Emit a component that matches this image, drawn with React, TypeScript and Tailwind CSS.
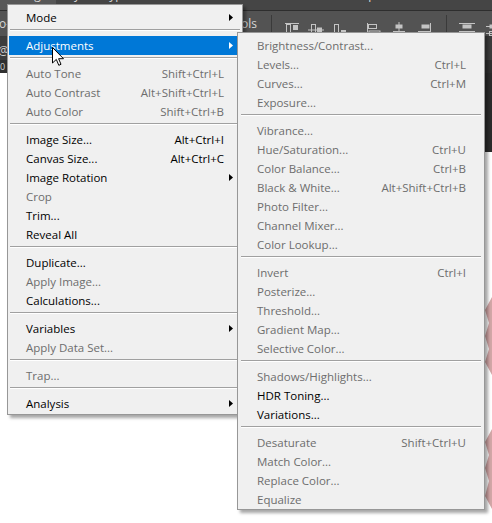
import React from 'react';

type Row = { l: string; s?: string; d?: boolean; a?: boolean; hl?: boolean };
type Item = Row | 'sep';

const mainItems: Item[] = [
  { l: 'Mode', a: true },
  'sep',
  { l: 'Adjustments', a: true, hl: true },
  'sep',
  { l: 'Auto Tone', s: 'Shift+Ctrl+L', d: true },
  { l: 'Auto Contrast', s: 'Alt+Shift+Ctrl+L', d: true },
  { l: 'Auto Color', s: 'Shift+Ctrl+B', d: true },
  'sep',
  { l: 'Image Size...', s: 'Alt+Ctrl+I' },
  { l: 'Canvas Size...', s: 'Alt+Ctrl+C' },
  { l: 'Image Rotation', a: true },
  { l: 'Crop', d: true },
  { l: 'Trim...' },
  { l: 'Reveal All' },
  'sep',
  { l: 'Duplicate...' },
  { l: 'Apply Image...', d: true },
  { l: 'Calculations...' },
  'sep',
  { l: 'Variables', a: true },
  { l: 'Apply Data Set...', d: true },
  'sep',
  { l: 'Trap...', d: true },
  'sep',
  { l: 'Analysis', a: true },
];

const subItems: Item[] = [
  { l: 'Brightness/Contrast...', d: true },
  { l: 'Levels...', s: 'Ctrl+L', d: true },
  { l: 'Curves...', s: 'Ctrl+M', d: true },
  { l: 'Exposure...', d: true },
  'sep',
  { l: 'Vibrance...', d: true },
  { l: 'Hue/Saturation...', s: 'Ctrl+U', d: true },
  { l: 'Color Balance...', s: 'Ctrl+B', d: true },
  { l: 'Black & White...', s: 'Alt+Shift+Ctrl+B', d: true },
  { l: 'Photo Filter...', d: true },
  { l: 'Channel Mixer...', d: true },
  { l: 'Color Lookup...', d: true },
  'sep',
  { l: 'Invert', s: 'Ctrl+I', d: true },
  { l: 'Posterize...', d: true },
  { l: 'Threshold...', d: true },
  { l: 'Gradient Map...', d: true },
  { l: 'Selective Color...', d: true },
  'sep',
  { l: 'Shadows/Highlights...', d: true },
  { l: 'HDR Toning...' },
  { l: 'Variations...' },
  'sep',
  { l: 'Desaturate', s: 'Shift+Ctrl+U', d: true },
  { l: 'Match Color...', d: true },
  { l: 'Replace Color...', d: true },
  { l: 'Equalize', d: true },
];

function Arrow({ white }: { white?: boolean }) {
  return (
    <svg width="4" height="7" viewBox="0 0 4 7" className="block">
      <path d="M0 0 L4 3.5 L0 7 Z" fill={white ? '#ffffff' : '#000000'} />
    </svg>
  );
}

function Sep({ main }: { main?: boolean }) {
  return (
    <div className={main ? 'h-[9px] pt-[2px] mx-[1px]' : 'h-[9px] pt-[2px] mx-[2px]'}>
      <div className="h-[1px] bg-[#a0a0a0]" />
      <div className="h-[1px] bg-[#ffffff]" />
    </div>
  );
}

function MenuRow({ it, main }: { it: Row; main?: boolean }) {
  const color = it.hl ? 'text-white' : it.d ? 'text-[#6d6d6d]' : 'text-black';
  return (
    <div
      className={
        'flex items-center h-[19px] leading-[19px] whitespace-nowrap ' +
        (main ? 'pl-[17px] pr-[8px] ' : 'pl-[18px] pr-[17px] ') +
        (it.hl ? 'bg-[#0078d7] ' : '') +
        color
      }
    >
      <span className="flex-1">{it.l}</span>
      {it.s && <span>{it.s}</span>}
      {main && (
        <span className="w-[4px] ml-[5px] flex items-center">{it.a && <Arrow white={it.hl} />}</span>
      )}
    </div>
  );
}

function Menu({ items, main }: { items: Item[]; main?: boolean }) {
  return (
    <div className="flex flex-col">
      {items.map((it, i) =>
        it === 'sep' ? <Sep key={i} main={main} /> : <MenuRow key={i} it={it} main={main} />
      )}
    </div>
  );
}

const ic = '#c4c4c4';

function IconAlignTop() {
  return (
    <svg width="16" height="16" viewBox="0 0 16 16">
      <line x1="1" y1="1.5" x2="15" y2="1.5" stroke={ic} />
      <rect x="2.5" y="2.5" width="4" height="11" fill="none" stroke={ic} />
      <rect x="9" y="3" width="5" height="5" fill={ic} />
    </svg>
  );
}
function IconAlignV() {
  return (
    <svg width="16" height="16" viewBox="0 0 16 16">
      <line x1="0" y1="8" x2="16" y2="8" stroke={ic} />
      <rect x="3.5" y="2.5" width="4" height="11" fill="none" stroke={ic} />
      <rect x="9" y="5.5" width="5" height="5" fill={ic} />
    </svg>
  );
}
function IconAlignBottom() {
  return (
    <svg width="16" height="16" viewBox="0 0 16 16">
      <line x1="1" y1="14.5" x2="15" y2="14.5" stroke={ic} />
      <rect x="2.5" y="2.5" width="4" height="11" fill="none" stroke={ic} />
      <rect x="9" y="8" width="5" height="5" fill={ic} />
    </svg>
  );
}
function IconAlignLeft() {
  return (
    <svg width="16" height="16" viewBox="0 0 16 16">
      <line x1="1.5" y1="1" x2="1.5" y2="15" stroke={ic} />
      <rect x="2.5" y="2.5" width="8" height="4" fill="none" stroke={ic} />
      <rect x="3" y="9" width="11" height="5" fill="none" stroke={ic} />
    </svg>
  );
}
function IconAlignH() {
  return (
    <svg width="16" height="16" viewBox="0 0 16 16">
      <line x1="8" y1="0" x2="8" y2="16" stroke={ic} />
      <rect x="4.5" y="2.5" width="7" height="4" fill={ic} />
      <rect x="2.5" y="9.5" width="11" height="4" fill="none" stroke={ic} />
    </svg>
  );
}
function IconAlignRight() {
  return (
    <svg width="16" height="16" viewBox="0 0 16 16">
      <line x1="14.5" y1="1" x2="14.5" y2="15" stroke={ic} />
      <rect x="5.5" y="2.5" width="8" height="4" fill={ic} />
      <rect x="2.5" y="9.5" width="11" height="4" fill="none" stroke={ic} />
    </svg>
  );
}
function IconDistTop() {
  return (
    <svg width="18" height="16" viewBox="0 0 18 16">
      <line x1="1" y1="1.5" x2="17" y2="1.5" stroke={ic} />
      <rect x="4.5" y="2.5" width="9" height="4" fill={ic} />
      <line x1="1" y1="9.5" x2="17" y2="9.5" stroke={ic} />
      <rect x="4.5" y="10.5" width="9" height="4" fill="none" stroke={ic} />
    </svg>
  );
}
function IconDistV() {
  return (
    <svg width="16" height="16" viewBox="0 0 16 16">
      <line x1="0" y1="4.5" x2="16" y2="4.5" stroke={ic} />
      <rect x="3.5" y="2.5" width="9" height="4" fill={ic} />
      <line x1="0" y1="11.5" x2="16" y2="11.5" stroke={ic} />
      <rect x="3.5" y="9.5" width="9" height="4" fill="none" stroke={ic} />
    </svg>
  );
}

function VSep() {
  return <div className="w-[1px] h-[18px] bg-[#3a3a3a]" />;
}

function pinkBand(tips: number[]) {
  const pts: string[] = [];
  const half = 13;
  pts.push(`8,${tips[0] - half}`);
  tips.forEach((t, i) => {
    pts.push(`1,${t}`);
    pts.push(`${i === tips.length - 1 ? 8 : 5},${t + half}`);
  });
  pts.push(`8,${tips[tips.length - 1] + half}`);
  return pts.join(' ');
}

export default function App() {
  const menuSpan = 'block mt-[-11px] leading-[12px]';
  return (
    <div className="relative w-[492px] h-[523px] overflow-hidden bg-white font-['Open_Sans',sans-serif] text-[11.5px]">
      {/* Photoshop background */}
      <div className="flex flex-col h-full">
        {/* menu bar (only descenders visible) */}
        <div className="h-[10px] bg-[#454545] flex overflow-hidden text-[12px] text-[#d8d8d8] whitespace-nowrap">
          <div className="w-[56px] bg-[#575757] pl-[13px]">
            <span className={menuSpan}>Image</span>
          </div>
          <span className={menuSpan + ' ml-[5px]'}>Layer</span>
          <span className={menuSpan + ' ml-[11px]'}>Type</span>
          <span className={menuSpan + ' ml-[12px]'}>Select</span>
          <span className={menuSpan + ' ml-[12px]'}>Filter</span>
          <span className={menuSpan + ' ml-[12px]'}>3D</span>
          <span className={menuSpan + ' ml-[12px]'}>View</span>
          <span className={menuSpan + ' ml-[12px]'}>Window</span>
          <span className={menuSpan + ' ml-[12px]'}>Help</span>
        </div>
        <div className="h-[1px] bg-[#2e2e2e]" />
        {/* options bar */}
        <div className="h-[25px] bg-[#535353] flex items-center text-[12px] text-[#d6d6d6] whitespace-nowrap">
          <div className="w-[257px] flex justify-between shrink-0">
            <span className="ml-[-1px]">o-</span>
            <span>Show Transform Controls</span>
          </div>
          <div className="ml-[14px]">
            <VSep />
          </div>
          <div className="flex items-end self-end gap-[8px] ml-[12px] mb-[-2px]">
            <IconAlignTop />
            <IconAlignV />
            <IconAlignBottom />
          </div>
          <div className="flex items-end self-end gap-[9px] ml-[18px] mb-[-2px]">
            <IconAlignLeft />
            <IconAlignH />
            <IconAlignRight />
          </div>
          <div className="ml-[14px]">
            <VSep />
          </div>
          <div className="flex items-end self-end gap-[10px] ml-[11px] mb-[-2px]">
            <IconDistTop />
            <IconDistV />
          </div>
        </div>
        <div className="h-[1px] bg-[#3a3a3a]" />
        {/* document tab bar */}
        <div className="h-[23px] bg-[#3c3c3c] flex items-end pb-[2px] text-[12px] text-[#d0d0d0] whitespace-nowrap">
          <span className="ml-[-2px] leading-[14px]">@</span>
        </div>
        {/* ruler */}
        <div className="h-[13px] bg-[#2f2f2f] flex items-center text-[9px] text-[#cfcfcf]">
          <span className="leading-[9px]">0</span>
        </div>
        {/* canvas */}
        <div className="flex-1 flex">
          <div className="flex-1 bg-white" />
          <div className="w-[8px] flex flex-col">
            <div className="h-[79px] bg-[#2b2b2b] shrink-0" />
            <svg width="8" height="371" viewBox="0 0 8 371" className="block shrink-0">
              <polygon points={pinkBand([158, 184, 210])} fill="#d3a7a7" />
              <polygon points={pinkBand([290, 316, 344])} fill="#d3a7a7" />
            </svg>
          </div>
        </div>
      </div>

      {/* Image menu */}
      <div className="absolute left-[7px] top-[4px] w-[236px] bg-[#f0f0f0] border border-[#979797] px-[1px] pt-[3px] pb-[1px] shadow-[3px_3px_3px_rgba(0,0,0,0.35)]">
        <Menu items={mainItems} main />
      </div>

      {/* Adjustments submenu */}
      <div className="absolute left-[237px] top-[32px] w-[248px] bg-[#f0f0f0] border border-[#979797] px-[1px] pt-[3px] pb-[0px] shadow-[3px_3px_3px_rgba(0,0,0,0.35)]">
        <Menu items={subItems} />
      </div>

      {/* mouse cursor */}
      <svg width="13" height="20" viewBox="0 0 13 20" className="absolute left-[52px] top-[47px]">
        <path
          d="M0.5 0.5 L0.5 16 L4.3 12.4 L6.8 18.3 L9 17.3 L6.6 11.7 L11.5 11.7 Z"
          fill="#ffffff"
          stroke="#000000"
          strokeWidth="1"
          strokeLinejoin="miter"
        />
      </svg>
    </div>
  );
}
